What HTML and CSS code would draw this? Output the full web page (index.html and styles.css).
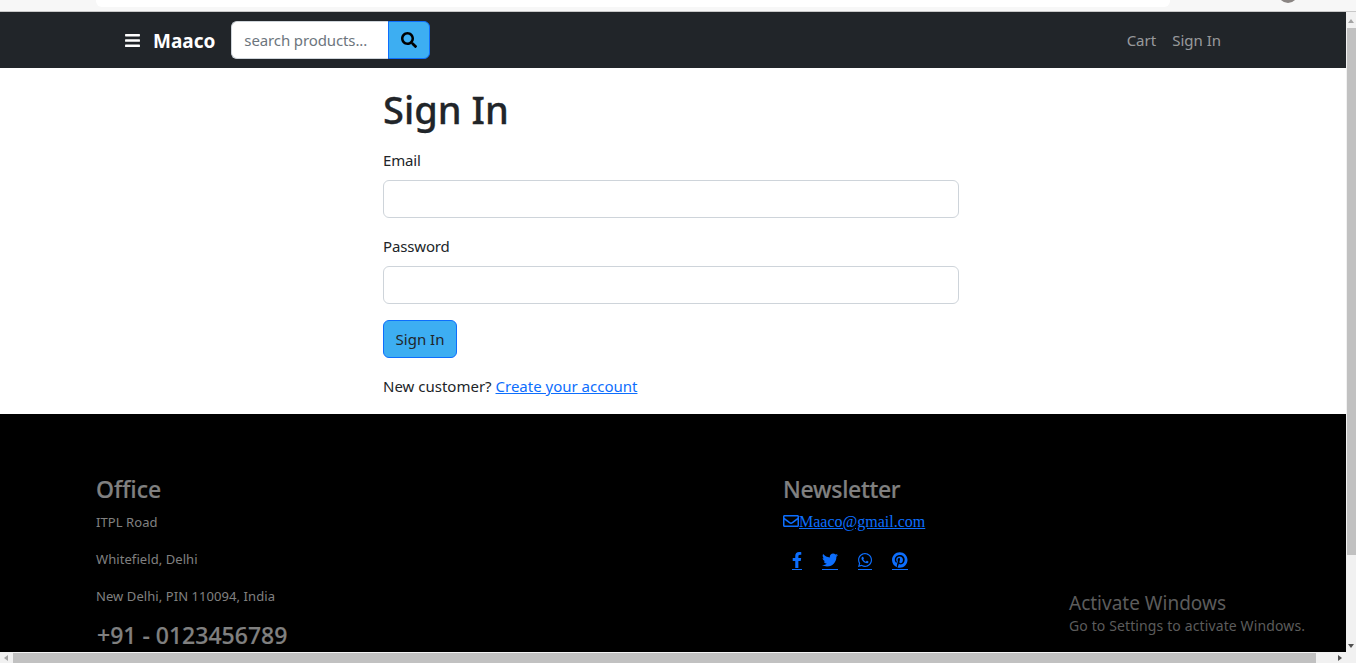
FILE: index.html
```html
<!DOCTYPE html>
<html lang="en">
<head>
  <meta charset="UTF-8">
  <meta name="viewport" content="width=device-width, initial-scale=1.0">
  <title>Maaco - Sign In</title>
  <link rel="stylesheet" href="styles.css">
</head>
<body>
  <!-- bottom edge of the browser toolbar -->
  <div class="browser-strip">
    <div class="url-box"></div>
    <div class="avatar"></div>
  </div>

  <div class="window">
    <div class="page">
      <nav class="navbar">
        <div class="nav-left">
          <svg class="icon-bars" viewBox="0 0 448 512"><path d="M16 132h416c8.837 0 16-7.163 16-16V76c0-8.837-7.163-16-16-16H16C7.163 60 0 67.163 0 76v40c0 8.837 7.163 16 16 16zm0 160h416c8.837 0 16-7.163 16-16v-40c0-8.837-7.163-16-16-16H16c-8.837 0-16 7.163-16 16v40c0 8.837 7.163 16 16 16zm0 160h416c8.837 0 16-7.163 16-16v-40c0-8.837-7.163-16-16-16H16c-8.837 0-16 7.163-16 16v40c0 8.837 7.163 16 16 16z"/></svg>
          <a class="brand" href="#">Maaco</a>
          <form class="search">
            <input class="search-input" type="text" placeholder="search products...">
            <button class="search-button" type="button">
              <svg class="icon-search" viewBox="0 0 512 512"><path d="M505 442.7L405.3 343c-4.5-4.5-10.6-7-17-7H372c27.6-35.3 44-79.7 44-128C416 93.1 322.9 0 208 0S0 93.1 0 208s93.1 208 208 208c48.3 0 92.7-16.4 128-44v16.3c0 6.4 2.5 12.5 7 17l99.7 99.7c9.4 9.4 24.6 9.4 33.9 0l28.3-28.3c9.4-9.4 9.4-24.6.1-34zM208 336c-70.7 0-128-57.2-128-128 0-70.7 57.2-128 128-128 70.7 0 128 57.2 128 128 0 70.7-57.2 128-128 128z"/></svg>
            </button>
          </form>
        </div>
        <div class="nav-right">
          <a href="#">Cart</a>
          <a href="#">Sign In</a>
        </div>
      </nav>

      <main class="signin">
        <h1>Sign In</h1>
        <form>
          <label for="email">Email</label>
          <input id="email" class="field" type="email">
          <label for="password">Password</label>
          <input id="password" class="field" type="password">
          <button class="submit" type="button">Sign In</button>
        </form>
        <p class="register">New customer? <a href="#">Create your account</a></p>
      </main>

      <footer class="footer">
        <div class="office">
          <h4>Office</h4>
          <p>ITPL Road</p>
          <p>Whitefield, Delhi</p>
          <p>New Delhi, PIN 110094, India</p>
          <h4 class="phone">+91 - 0123456789</h4>
        </div>
        <div class="newsletter">
          <h4 class="news-title">Newsletter</h4>
          <a class="mail" href="#"><svg class="icon-mail" viewBox="0 0 512 512"><path d="M464 64H48C21.49 64 0 85.49 0 112v288c0 26.51 21.49 48 48 48h416c26.51 0 48-21.49 48-48V112c0-26.51-21.49-48-48-48zm0 48v40.805c-22.422 18.259-58.168 46.651-134.587 106.49-16.841 13.247-50.201 45.072-73.413 44.701-23.208.375-56.579-31.459-73.413-44.701C106.18 199.465 70.425 171.067 48 152.805V112h416zM48 400V214.398c22.914 18.251 55.409 43.862 104.938 82.646 21.857 17.205 60.134 55.186 103.062 54.955 42.717.231 80.509-37.199 103.053-54.947 49.528-38.783 82.032-64.401 104.947-82.653V400H48z"/></svg>Maaco@gmail.com</a>
          <div class="social">
            <a href="#"><svg viewBox="0 0 320 512"><path d="M279.14 288l14.22-92.66h-88.91v-60.13c0-25.35 12.42-50.06 52.24-50.06h40.42V6.26S260.43 0 225.36 0c-73.22 0-121.08 44.38-121.08 124.72v70.62H22.89V288h81.39v224h100.17V288z"/></svg></a>
            <a href="#"><svg viewBox="0 0 512 512"><path d="M459.37 151.716c.325 4.548.325 9.097.325 13.645 0 138.72-105.583 298.558-298.558 298.558-59.452 0-114.68-17.219-161.137-47.106 8.447.974 16.568 1.299 25.34 1.299 49.055 0 94.213-16.568 130.274-44.832-46.132-.975-84.792-31.188-98.112-72.772 6.498.974 12.995 1.624 19.818 1.624 9.421 0 18.843-1.3 27.614-3.573-48.081-9.747-84.143-51.98-84.143-102.985v-1.299c13.969 7.797 30.214 12.67 47.431 13.319-28.264-18.843-46.781-51.005-46.781-87.391 0-19.492 5.197-37.36 14.294-52.954 51.655 63.675 129.3 105.258 216.365 109.807-1.624-7.797-2.599-15.918-2.599-24.04 0-57.828 46.782-104.934 104.934-104.934 30.213 0 57.502 12.67 76.67 33.137 23.715-4.548 46.456-13.32 66.599-25.34-7.798 24.366-24.366 44.833-46.132 57.827 21.117-2.273 41.584-8.122 60.426-16.243-14.292 20.791-32.161 39.308-52.628 54.253z"/></svg></a>
            <a href="#"><svg viewBox="0 0 448 512"><path d="M380.9 97.1C339 55.1 283.2 32 223.9 32c-122.4 0-222 99.6-222 222 0 39.1 10.2 77.3 29.6 111L0 480l117.7-30.9c32.4 17.7 68.9 27 106.1 27h.1c122.3 0 224.1-99.6 224.1-222 0-59.3-25.2-115-67.1-157zm-157 341.6c-33.2 0-65.7-8.9-94-25.7l-6.7-4-69.8 18.3L72 359.2l-4.4-7c-18.5-29.4-28.2-63.3-28.2-98.2 0-101.7 82.8-184.5 184.6-184.5 49.3 0 95.6 19.2 130.4 54.1 34.8 34.9 56.2 81.2 56.1 130.5 0 101.8-84.9 184.6-186.6 184.6zm101.2-138.2c-5.5-2.8-32.8-16.2-37.9-18-5.1-1.9-8.8-2.8-12.5 2.8-3.7 5.6-14.3 18-17.6 21.8-3.2 3.7-6.5 4.2-12 1.4-32.6-16.3-54-29.1-75.5-66-5.7-9.8 5.7-9.1 16.3-30.3 1.8-3.7.9-6.9-.5-9.7-1.4-2.8-12.5-30.1-17.1-41.2-4.5-10.8-9.1-9.3-12.5-9.5-3.2-.2-6.9-.2-10.6-.2-3.7 0-9.7 1.4-14.8 6.9-5.1 5.6-19.4 19-19.4 46.3 0 27.3 19.9 53.7 22.6 57.4 2.8 3.7 39.1 59.7 94.8 83.8 35.2 15.2 49 16.5 66.6 13.9 10.7-1.6 32.8-13.4 37.4-26.4 4.6-13 4.6-24.1 3.2-26.4-1.3-2.5-5-3.9-10.5-6.6z"/></svg></a>
            <a href="#"><svg viewBox="0 0 496 512"><path d="M496 256c0 137-111 248-248 248-25.6 0-50.2-3.9-73.4-11.1 10.1-16.5 25.2-43.5 30.8-65 3-11.6 15.4-59 15.4-59 8.1 15.4 31.7 28.5 56.8 28.5 74.8 0 128.7-68.8 128.7-154.3 0-81.9-66.9-143.2-152.9-143.2-107 0-163.9 71.8-163.9 150.1 0 36.4 19.4 81.7 50.3 96.1 4.7 2.2 7.2 1.2 8.3-3.3.8-3.4 5-20.3 6.9-28.1.6-2.5.3-4.7-1.7-7.1-10.1-12.5-18.3-35.3-18.3-56.6 0-54.7 41.4-107.6 112-107.6 60.9 0 103.6 41.5 103.6 100.9 0 67.1-33.9 113.6-78 113.6-24.3 0-42.6-20.1-36.7-44.8 7-29.5 20.5-61.3 20.5-82.6 0-19-10.2-34.9-31.4-34.9-24.9 0-44.9 25.7-44.9 60.2 0 22 7.4 36.8 7.4 36.8s-24.5 103.8-29 123.2c-5 21.4-3 51.6-.9 71.2C65.4 450.9 0 361.1 0 256 0 119 111 8 248 8s248 111 248 248z"/></svg></a>
          </div>
        </div>
      </footer>

      <div class="activate">
        <div class="activate-title">Activate Windows</div>
        <div class="activate-text">Go to Settings to activate Windows.</div>
      </div>
    </div>

    <div class="scroll-v">
      <span class="arrow-up"></span>
      <div class="thumb-v"></div>
      <span class="arrow-down"></span>
    </div>
    <div class="scroll-h">
      <span class="arrow-left"></span>
      <div class="thumb-h"></div>
      <span class="arrow-right"></span>
    </div>
    <div class="scroll-corner"></div>
  </div>
</body>
</html>
```

FILE: styles.css
```css
* {
  box-sizing: border-box;
}
body {
  margin: 0;
  height: 100vh;
  overflow: hidden;
  display: flex;
  flex-direction: column;
  font-family: "Noto Sans", "Open Sans", sans-serif;
  font-size: 15px;
  color: #212529;
  background: #fff;
}
a {
  color: #0d6efd;
}

.browser-strip {
  height: 12px;
  flex: none;
  position: relative;
  background: #f7f7f7;
  border-bottom: 1px solid #c8c8c8;
}
.url-box {
  position: absolute;
  left: 96px;
  top: 0;
  width: 1074px;
  height: 7px;
  background: #fff;
  border-radius: 0 0 6px 6px;
}
.avatar {
  position: absolute;
  left: 1278px;
  top: -17px;
  width: 20px;
  height: 20px;
  border-radius: 50%;
  background: #8a8583;
}

.window {
  flex: 1;
  min-height: 0;
  display: grid;
  grid-template-columns: 1fr 10px;
  grid-template-rows: 1fr 11px;
}
.page {
  position: relative;
  overflow: hidden;
  min-width: 0;
  min-height: 0;
}

.navbar {
  height: 56px;
  background: #212529;
  display: flex;
  justify-content: space-between;
  align-items: center;
  padding: 0 125px;
}
.nav-left {
  display: flex;
  align-items: center;
}
.icon-bars {
  width: 15px;
  height: 17px;
  fill: #fff;
  margin-right: 13px;
}
.brand {
  color: #fff;
  font-weight: 700;
  font-size: 19px;
  text-decoration: none;
  margin-right: 16px;
  padding-top: 2px;
}
.search {
  display: flex;
  margin: 0;
}
.search-input {
  width: 157px;
  height: 38px;
  padding: 0 12px;
  border: 1px solid #ced4da;
  border-right: none;
  border-radius: 6px 0 0 6px;
  font: inherit;
  letter-spacing: -0.12px;
  outline: none;
}
.search-input::placeholder {
  color: #6c757d;
}
.search-button {
  width: 42px;
  height: 38px;
  padding: 0;
  display: flex;
  align-items: center;
  justify-content: center;
  background: #3daef2;
  border: 1px solid #0d6efd;
  border-radius: 0 6px 6px 0;
}
.icon-search {
  width: 16px;
  height: 16px;
}
.nav-right {
  display: flex;
  gap: 16px;
}
.nav-right a {
  color: rgba(255, 255, 255, 0.55);
  text-decoration: none;
}

.signin {
  width: 576px;
  height: 346px;
  margin-left: 383px;
  padding-top: 15px;
}
.signin h1 {
  margin: 0 0 13px;
  font-size: 38px;
  font-weight: 500;
  -webkit-text-stroke: 0.3px #212529;
  line-height: 52px;
}
.signin label {
  display: block;
  line-height: 24px;
  margin-bottom: 8px;
  letter-spacing: -0.15px;
}
.field {
  display: block;
  width: 100%;
  height: 38px;
  margin-bottom: 16px;
  border: 1px solid #ced4da;
  border-radius: 6px;
}
.submit {
  display: block;
  width: 74px;
  height: 38px;
  padding: 0;
  font: inherit;
  color: #212529;
  background: #3daef2;
  border: 1px solid #0d6efd;
  border-radius: 6px;
}
.register {
  margin: 16px 0 0;
  line-height: 24px;
}

.footer {
  height: 300px;
  background: #000;
  color: #808080;
  display: grid;
  grid-template-columns: 687px 1fr;
  padding: 59px 0 0 96px;
}
.footer h4 {
  margin: 0 0 7px;
  font-size: 23px;
  font-weight: 500;
  -webkit-text-stroke: 0.2px #808080;
  line-height: 32px;
}
.footer p {
  margin: 0 0 16px;
  font-size: 13px;
  line-height: 21px;
  letter-spacing: 0.07px;
}
.footer .phone {
  margin: 4px 0 0 1px;
  line-height: 25px;
}
.footer .news-title {
  margin-bottom: 8px;
  letter-spacing: -0.3px;
}
.mail {
  font-family: "Liberation Serif", serif;
  font-size: 16px;
  line-height: 18px;
  display: block;
  width: max-content;
}
.icon-mail {
  width: 16px;
  height: 16px;
  fill: currentColor;
  vertical-align: -2px;
}
.social {
  display: flex;
  gap: 20px;
  padding: 21px 0 0 9px;
}
.social a {
  display: block;
  line-height: 0;
  padding-bottom: 1px;
  border-bottom: 1px solid #0d6efd;
}
.social svg {
  height: 16px;
  width: auto;
  fill: #0d6efd;
}

.activate {
  position: absolute;
  left: 1069px;
  top: 578px;
  color: #5c5c5c;
  font-size: 14px;
  letter-spacing: 0.12px;
  pointer-events: none;
}
.activate-title {
  font-size: 19px;
  line-height: 26px;
  letter-spacing: 0;
}
.activate-text {
  line-height: 20px;
}

.scroll-v {
  background: #f1f1f1;
  display: flex;
  flex-direction: column;
  align-items: flex-end;
}
.thumb-v {
  width: 9px;
  height: 527px;
  margin-top: 5px;
  background: #c1c1c1;
}
.arrow-up {
  margin: 7px 2px 0 0;
  border: 3px solid transparent;
  border-top: none;
  border-bottom: 4px solid #a3a3a3;
}
.arrow-down {
  margin: auto 2px 4px 0;
  border: 3px solid transparent;
  border-bottom: none;
  border-top: 4px solid #505050;
}
.scroll-h {
  background: #f1f1f1;
  border-top: 1px solid #f1f1f1;
  display: flex;
  align-items: center;
  padding: 0 4px;
}
.thumb-h {
  width: 1303px;
  height: 10px;
  margin-left: 5px;
  background: #c1c1c1;
}
.arrow-left {
  border: 3px solid transparent;
  border-left: none;
  border-right: 4px solid #a3a3a3;
}
.arrow-right {
  margin-left: auto;
  border: 3px solid transparent;
  border-right: none;
  border-left: 4px solid #505050;
}
.scroll-corner {
  background: #f1f1f1;
}
```
